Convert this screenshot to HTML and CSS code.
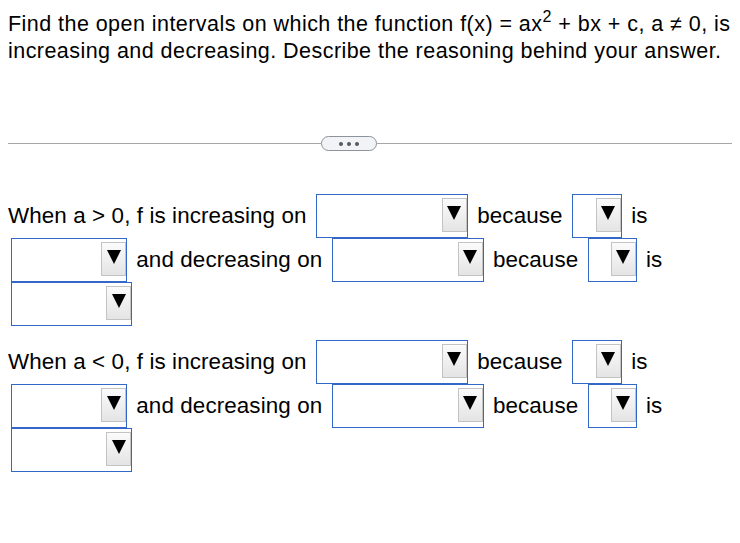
FILE: index.html
```html
<!DOCTYPE html>
<html>
<head>
<meta charset="utf-8">
<link rel="stylesheet" href="styles.css">
</head>
<body>
<p class="question">Find the open intervals on which the function f(x) = ax<sup>2</sup> + bx + c, a ≠ 0, is increasing and decreasing. Describe the reasoning behind your answer.</p>

<div class="divider">
  <span class="rule rule-left"></span>
  <span class="pill"><i></i><i></i><i></i></span>
  <span class="rule rule-right"></span>
</div>

<p class="part part-first">When a &gt; 0, f is increasing on <span class="dd dd-152"><span class="btn"><svg viewBox="0 0 14 14" width="14" height="14"><path d="M0 0H14L7 14Z"/></svg></span></span> because <span class="dd dd-50"><span class="btn"><svg viewBox="0 0 14 14" width="14" height="14"><path d="M0 0H14L7 14Z"/></svg></span></span> is <span class="dd dd-116"><span class="btn"><svg viewBox="0 0 14 14" width="14" height="14"><path d="M0 0H14L7 14Z"/></svg></span></span> and decreasing on <span class="dd dd-152"><span class="btn"><svg viewBox="0 0 14 14" width="14" height="14"><path d="M0 0H14L7 14Z"/></svg></span></span> because <span class="dd dd-49"><span class="btn"><svg viewBox="0 0 14 14" width="14" height="14"><path d="M0 0H14L7 14Z"/></svg></span></span> is <span class="dd dd-121"><span class="btn"><svg viewBox="0 0 14 14" width="14" height="14"><path d="M0 0H14L7 14Z"/></svg></span></span></p>

<p class="part part-second">When a &lt; 0, f is increasing on <span class="dd dd-152"><span class="btn"><svg viewBox="0 0 14 14" width="14" height="14"><path d="M0 0H14L7 14Z"/></svg></span></span> because <span class="dd dd-50"><span class="btn"><svg viewBox="0 0 14 14" width="14" height="14"><path d="M0 0H14L7 14Z"/></svg></span></span> is <span class="dd dd-116"><span class="btn"><svg viewBox="0 0 14 14" width="14" height="14"><path d="M0 0H14L7 14Z"/></svg></span></span> and decreasing on <span class="dd dd-152"><span class="btn"><svg viewBox="0 0 14 14" width="14" height="14"><path d="M0 0H14L7 14Z"/></svg></span></span> because <span class="dd dd-49"><span class="btn"><svg viewBox="0 0 14 14" width="14" height="14"><path d="M0 0H14L7 14Z"/></svg></span></span> is <span class="dd dd-121"><span class="btn"><svg viewBox="0 0 14 14" width="14" height="14"><path d="M0 0H14L7 14Z"/></svg></span></span></p>
</body>
</html>
```

FILE: styles.css
```css
html, body {
  background: #ffffff;
}
body {
  margin: 8px;
  font-family: "Liberation Sans", Arial, sans-serif;
  color: #000000;
}
.question {
  margin: 0;
  padding-top: 3px;
  font-size: 21.5px;
  letter-spacing: 0.45px;
  line-height: 27px;
}
.question sup {
  font-size: 0.75em;
  line-height: 0;
  vertical-align: 0.55em;
}
.divider {
  display: flex;
  align-items: center;
  margin: 71px -8px 0 -8px;
  height: 15px;
}
.rule {
  height: 1px;
  background: #a6a6a6;
}
.rule-left {
  width: 321px;
}
.rule-right {
  flex: 1;
}
.pill {
  box-sizing: border-box;
  width: 56px;
  height: 15px;
  border: 1px solid #8d939b;
  border-radius: 8px;
  background: #f1f3f6;
  display: flex;
  align-items: center;
  justify-content: center;
  gap: 4px;
}
.pill i {
  width: 4px;
  height: 4px;
  border-radius: 50%;
  background: #555a60;
}
.part {
  margin: 0;
  font-size: 22.4px;
  letter-spacing: 0.1px;
  line-height: 44px;
}
.part-first {
  margin-top: 43px;
}
.part-second {
  margin-top: 14px;
}
.dd {
  box-sizing: border-box;
  display: inline-flex;
  justify-content: flex-end;
  align-items: flex-start;
  vertical-align: top;
  height: 44px;
  margin: 0 3px;
  padding-top: 3px;
  border: 1px solid #3468c8;
  background: #ffffff;
}
.dd-152 { width: 152px; }
.dd-50 { width: 50px; }
.dd-49 { width: 49px; }
.dd-116 { width: 116px; }
.dd-121 { width: 121px; }
.btn {
  box-sizing: border-box;
  width: 25px;
  height: 34px;
  border: 1px solid #c3c3c3;
  background: linear-gradient(#fbfbfb, #e4e4e4);
  display: flex;
  justify-content: center;
  align-items: flex-start;
  padding-top: 7px;
}
.btn svg {
  display: block;
  fill: #000000;
}
```
